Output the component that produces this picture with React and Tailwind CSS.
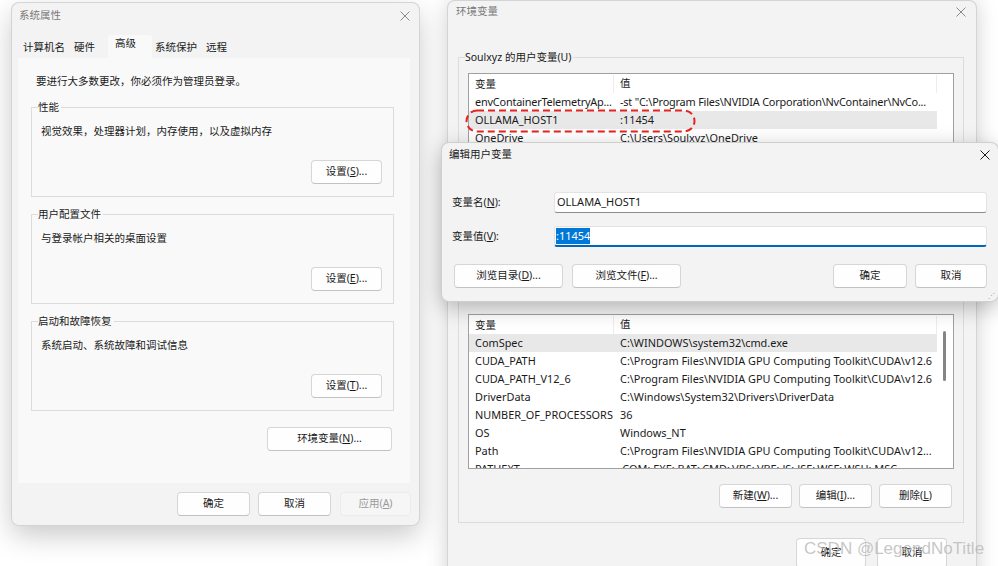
import React from "react";

const CloseIcon = ({ className = "" }) => (
  <svg width="10" height="10" viewBox="0 0 10 10" className={className}>
    <path d="M0.5 0.5L9.5 9.5M9.5 0.5L0.5 9.5" stroke="currentColor" strokeWidth="1" />
  </svg>
);

const Btn = ({ children, className = "" }) => (
  <div
    className={
      "flex h-[24px] items-center justify-center rounded-[4px] border border-[#d6d6d6] border-b-[#c2c2c2] bg-[#fefefe] text-[#1a1a1a] " +
      className
    }
  >
    {children}
  </div>
);

const Group = ({ label, labelBg, className = "", children }) => (
  <div className={"relative flex flex-col border border-[#dcdcdc] " + className}>
    <span className={"absolute left-[6px] top-[-9px] pr-[2px] leading-[16px] " + labelBg}>{label}</span>
    {children}
  </div>
);

// third field: squeeze the letters a little so the shortened text fits like the original
const userRows = [
  ["envContainerTelemetryAp...", '-st "C:\\Program Files\\NVIDIA Corporation\\NvContainer\\NvCo...', true],
  ["OLLAMA_HOST1", ":11454"],
  ["OneDrive", "C:\\Users\\Soulxyz\\OneDrive"],
  ["OneDriveConsumer", "C:\\Users\\Soulxyz\\OneDrive"],
  ["Path", "C:\\Users\\Soulxyz\\AppData\\Local\\Microsoft\\WindowsApps;"],
  ["TEMP", "C:\\Users\\Soulxyz\\AppData\\Local\\Temp"],
  ["TMP", "C:\\Users\\Soulxyz\\AppData\\Local\\Temp"],
];

const sysRows = [
  ["ComSpec", "C:\\WINDOWS\\system32\\cmd.exe"],
  ["CUDA_PATH", "C:\\Program Files\\NVIDIA GPU Computing Toolkit\\CUDA\\v12.6"],
  ["CUDA_PATH_V12_6", "C:\\Program Files\\NVIDIA GPU Computing Toolkit\\CUDA\\v12.6"],
  ["DriverData", "C:\\Windows\\System32\\Drivers\\DriverData"],
  ["NUMBER_OF_PROCESSORS", "36"],
  ["OS", "Windows_NT"],
  ["Path", "C:\\Program Files\\NVIDIA GPU Computing Toolkit\\CUDA\\v12..."],
  ["PATHEXT", ".COM;.EXE;.BAT;.CMD;.VBS;.VBE;.JS;.JSE;.WSF;.WSH;.MSC"],
];

const VarList = ({ rows, selected, thumb, className = "" }) => (
  <div className={"relative overflow-hidden border border-[#a0a0a0] bg-white " + className}>
    <div className="mr-[16px] mt-[1px] flex h-[18px] items-center border-r border-[#ececec]">
      <div className="h-full w-[145px] border-r border-[#ececec] pl-[6px] leading-[18px]">变量</div>
      <div className="pl-[6px]">值</div>
    </div>
    {rows.map(([k, v, tight], i) => (
      <div
        key={k + i}
        className={
          "mr-[16px] flex h-[18px] items-center whitespace-nowrap text-[10.9px] " +
          (i === selected ? "bg-[#e8e8e8] " : "") +
          (tight ? "tracking-[-0.2px]" : "")
        }
      >
        <div className="w-[145px] shrink-0 pl-[6px]">{k}</div>
        <div className="pl-[6px]">{v}</div>
      </div>
    ))}
    {thumb && <div className="absolute right-[7px] top-[16px] h-[50px] w-[3px] rounded-full bg-[#858585]" />}
  </div>
);

export default function App() {
  return (
    <div className="relative h-[566px] w-[998px] overflow-hidden bg-white font-['Noto_Sans','Noto_Sans_CJK_SC',sans-serif] text-[10.5px] text-[#1a1a1a]">
      {/* 系统属性 */}
      <div className="absolute left-[12px] top-[3px] flex h-[522px] w-[407px] flex-col rounded-[7px] bg-[#f3f3f3] shadow-[0_10px_28px_rgba(0,0,0,0.22)] ring-1 ring-[#d4d4d4]">
        <div className="flex h-[26px] items-center justify-between pl-[7px] pr-[9px] text-[#7a7a7a]">
          <span>系统属性</span>
          <CloseIcon className="text-[#8a8a8a]" />
        </div>
        <div className="flex h-[29px] items-end pl-[11px]">
          <div className="flex h-[21px] items-center">计算机名</div>
          <div className="ml-[9px] flex h-[21px] items-center">硬件</div>
          <div className="ml-[13px] flex h-[23px] items-start rounded-t-[3px] bg-[#f9f9f9] pl-[7px] pr-[16px] pt-[1px]">高级</div>
          <div className="ml-[3px] flex h-[21px] items-center">系统保护</div>
          <div className="ml-[9px] flex h-[21px] items-center">远程</div>
        </div>
        <div className="ml-[6px] mr-[9px] flex h-[425px] flex-col bg-[#f9f9f9] pl-[13px] pr-[16px]">
          <div className="ml-[5px] mt-[15px] leading-[16px]">要进行大多数更改，你必须作为管理员登录。</div>
          <Group label="性能" labelBg="bg-[#f9f9f9]" className="mt-[18px] h-[90px]">
            <div className="pl-[9px] pt-[15px] leading-[16px]">视觉效果，处理器计划，内存使用，以及虚拟内存</div>
            <Btn className="mr-[11px] mt-[21px] w-[71px] self-end">
              设置(<u>S</u>)...
            </Btn>
          </Group>
          <Group label="用户配置文件" labelBg="bg-[#f9f9f9]" className="mt-[17px] h-[90px]">
            <div className="pl-[9px] pt-[15px] leading-[16px]">与登录帐户相关的桌面设置</div>
            <Btn className="mr-[11px] mt-[21px] w-[71px] self-end">
              设置(<u>E</u>)...
            </Btn>
          </Group>
          <Group label="启动和故障恢复" labelBg="bg-[#f9f9f9]" className="mt-[17px] h-[90px]">
            <div className="pl-[9px] pt-[15px] leading-[16px]">系统启动、系统故障和调试信息</div>
            <Btn className="mr-[11px] mt-[21px] w-[71px] self-end">
              设置(<u>T</u>)...
            </Btn>
          </Group>
          <Btn className="mr-[2px] mt-[16px] w-[125px] self-end">
            环境变量(<u>N</u>)...
          </Btn>
        </div>
        <div className="flex flex-1 items-start justify-end gap-[8px] pr-[8px] pt-[9px]">
          <Btn className="w-[73px]">确定</Btn>
          <Btn className="w-[73px]">取消</Btn>
          <div className="ml-[1px] flex h-[24px] w-[71px] items-center justify-center rounded-[4px] border border-[#ececec] bg-[#f6f6f6] text-[#9a9a9a]">
            应用(<u>A</u>)
          </div>
        </div>
      </div>

      {/* 环境变量 */}
      <div className="absolute left-[448px] top-[1px] flex h-[620px] w-[528px] flex-col rounded-t-[7px] bg-[#f3f3f3] shadow-[0_0_22px_rgba(0,0,0,0.2)] ring-1 ring-[#d4d4d4]">
        <div className="flex h-[22px] items-center justify-between pl-[8px] pr-[10px] text-[#7a7a7a]">
          <span>环境变量</span>
          <CloseIcon className="text-[#8a8a8a]" />
        </div>
        <Group label="Soulxyz 的用户变量(U)" labelBg="bg-[#f3f3f3]" className="ml-[10px] mr-[12px] mt-[34px] h-[228px]">
          <VarList rows={userRows} selected={1} className="ml-[9px] mr-[9px] mt-[15px] h-[160px]" />
        </Group>
        <Group label="系统变量(S)" labelBg="bg-[#f3f3f3]" className="ml-[10px] mr-[12px] mt-[11px] h-[227px]">
          <VarList rows={sysRows} selected={0} thumb className="ml-[9px] mr-[9px] mt-[17px] h-[155px]" />
          <div className="mr-[11px] mt-[15px] flex justify-end gap-[7px]">
            <Btn className="w-[73px]">
              新建(<u>W</u>)...
            </Btn>
            <Btn className="w-[73px]">
              编辑(<u>I</u>)...
            </Btn>
            <Btn className="w-[73px]">
              删除(<u>L</u>)
            </Btn>
          </div>
        </Group>
        <div className="mr-[29px] mt-[15px] flex justify-end gap-[11px]">
          <Btn className="h-[30px] w-[70px]">确定</Btn>
          <Btn className="h-[30px] w-[70px]">取消</Btn>
        </div>
      </div>

      {/* 红色标注 */}
      <svg className="absolute left-[465px] top-[109px]" width="232" height="24" viewBox="0 0 232 24">
        <rect x="1.5" y="1.5" width="228" height="21" rx="10.5" fill="none" stroke="#e8231f" strokeWidth="2" strokeDasharray="7 4" />
      </svg>

      {/* 编辑用户变量 */}
      <div className="absolute left-[442px] top-[143px] flex h-[158px] w-[556px] flex-col rounded-[7px] bg-[#f3f3f3] shadow-[0_6px_22px_rgba(0,0,0,0.28)] ring-1 ring-[#cfcfcf]">
        <div className="flex h-[24px] items-center justify-between pl-[7px] pr-[8px]">
          <span>编辑用户变量</span>
          <CloseIcon className="text-[#1a1a1a]" />
        </div>
        <div className="mt-[25px] flex items-center">
          <div className="w-[112px] pl-[10px]">
            变量名(<u>N</u>):
          </div>
          <div className="flex h-[21px] w-[433px] items-center rounded-[3px] border border-[#e3e3e3] border-b-[#8c8c8c] bg-white pl-[2px] text-[11px]">
            OLLAMA_HOST1
          </div>
        </div>
        <div className="mt-[13px] flex items-center">
          <div className="w-[112px] pl-[10px]">
            变量值(<u>V</u>):
          </div>
          <div className="flex h-[21px] w-[433px] items-center rounded-[3px] border border-[#e3e3e3] border-b-2 border-b-[#0067c0] bg-white pl-[1px] text-[11px]">
            <span className="bg-[#0078d7] text-white">:11454</span>
          </div>
        </div>
        <div className="mt-[17px] flex items-center">
          <Btn className="ml-[12px] w-[109px]">
            浏览目录(<u>D</u>)...
          </Btn>
          <Btn className="ml-[9px] w-[109px]">
            浏览文件(<u>F</u>)...
          </Btn>
          <div className="flex-1" />
          <Btn className="w-[74px] border-[#3b5670] border-b-[#3b5670]">确定</Btn>
          <Btn className="ml-[8px] mr-[11px] w-[72px]">取消</Btn>
        </div>
        <div className="absolute bottom-[2px] right-[3px] text-[7px] leading-none text-[#9a9a9a]">⋰</div>
      </div>

      {/* 水印 */}
      <div className="absolute left-[804px] top-[539px] font-['Liberation_Sans',Arial,sans-serif] text-[17px] leading-[20px] text-[#b8b8b8]/80">
        CSDN @LegendNoTitle
      </div>
    </div>
  );
}
